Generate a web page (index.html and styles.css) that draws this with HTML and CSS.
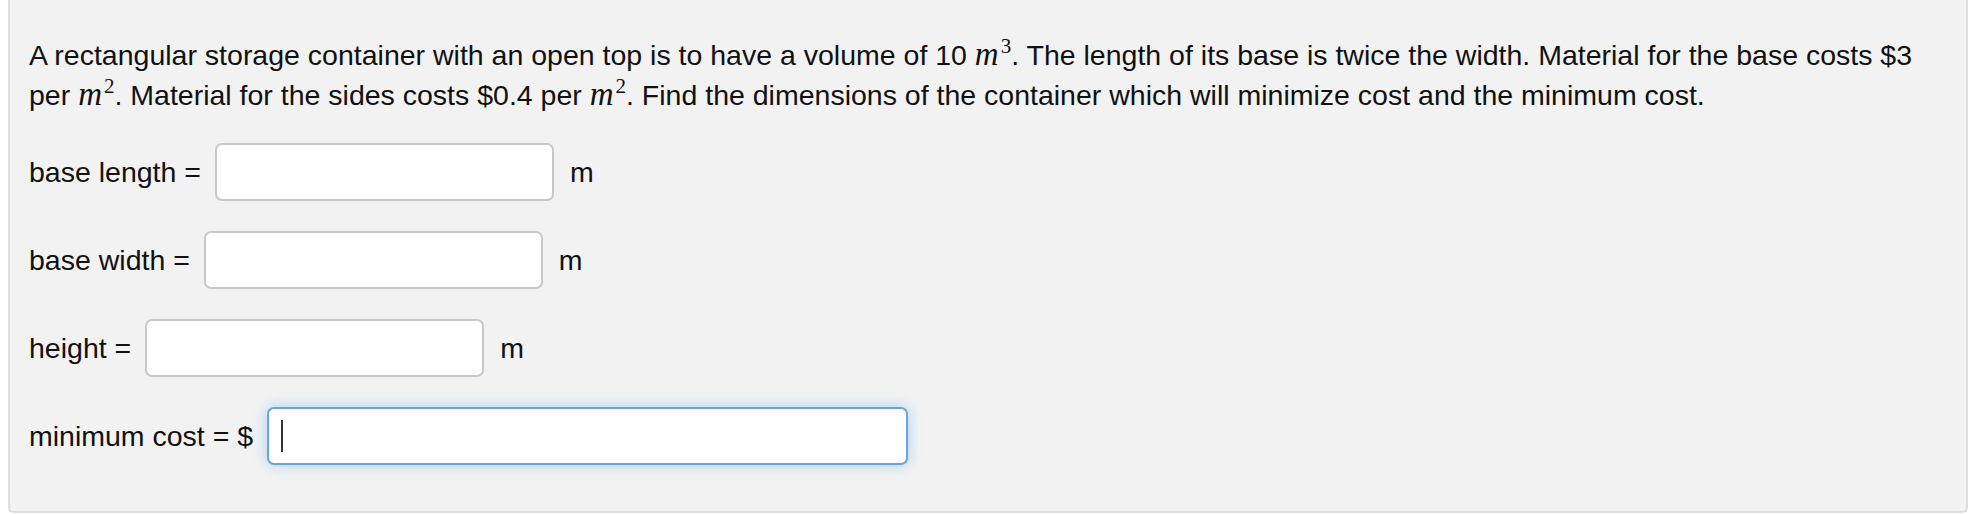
FILE: index.html
```html
<!doctype html>
<html lang="en">

<head>
    <meta charset="utf-8" />
    <link rel="icon" href="data:,">
    <meta name="viewport" content="width=device-width, initial-scale=1">
    <link rel="stylesheet" href="styles.css">
</head>

<body>
    <div class="problem">
        <p class="statement">
            A rectangular storage container with an open top is to have a volume of 10
            <span class="math"><i>m</i><sup>3</sup></span>. The length of its base is twice the width.
            Material for the base costs $3 per <span class="math"><i>m</i><sup>2</sup></span>.
            Material for the sides costs $0.4 per <span class="math"><i>m</i><sup>2</sup></span>.
            Find the dimensions of the container which will minimize cost and the minimum cost.
        </p>
        <label class="answer">
            base length =
            <input type="text" class="field" />
            <span class="unit">m</span>
        </label>
        <label class="answer">
            base width =
            <input type="text" class="field" />
            <span class="unit">m</span>
        </label>
        <label class="answer">
            height =
            <input type="text" class="field" />
            <span class="unit">m</span>
        </label>
        <label class="answer">
            minimum cost = $
            <span class="focuswrap">
                <input type="text" class="field field-wide focused" />
                <span class="caret"></span>
            </span>
        </label>
    </div>
</body>

</html>
```

FILE: styles.css
```css
html {
    font-family: "Liberation Sans", Arial, Helvetica, sans-serif;
    font-size: 28.5px;
    color: #111;
}

body {
    margin: 0;
    background: #fff;
}

.problem {
    margin: 0 14px 2px 8px;
    padding: 35px 19px 46px;
    background: #f2f2f2;
    border: 2px solid #dedede;
    border-top: 0;
    border-radius: 0 0 6px 6px;
}

.statement {
    margin: 0 0 28px;
    line-height: 40px;
}

.math {
    font-family: "Liberation Serif", "Times New Roman", serif;
    line-height: 1;
}

.math i {
    font-size: 33px;
    letter-spacing: 1px;
}

.math sup {
    font-size: 21px;
    line-height: 1;
    vertical-align: 12px;
    margin-left: 1px;
}

.answer {
    display: flex;
    align-items: center;
    gap: 14px;
    margin-bottom: 30px;
}

.answer:last-child {
    margin-bottom: 0;
}

.field {
    box-sizing: border-box;
    width: 339px;
    height: 58px;
    margin: 0;
    padding: 0 14px;
    font: inherit;
    background: #fff;
    border: 2px solid #c8c8c8;
    border-radius: 7px;
    outline: none;
}

.unit {
    margin-left: 2px;
}

.focuswrap {
    position: relative;
    display: flex;
}

.field-wide {
    width: 641px;
}

.focused {
    border-color: #63a4ea;
    box-shadow: 0 0 14px rgba(82, 168, 236, 0.45);
}

.caret {
    position: absolute;
    left: 14px;
    top: 13px;
    width: 2px;
    height: 32px;
    background: #333;
}
```
